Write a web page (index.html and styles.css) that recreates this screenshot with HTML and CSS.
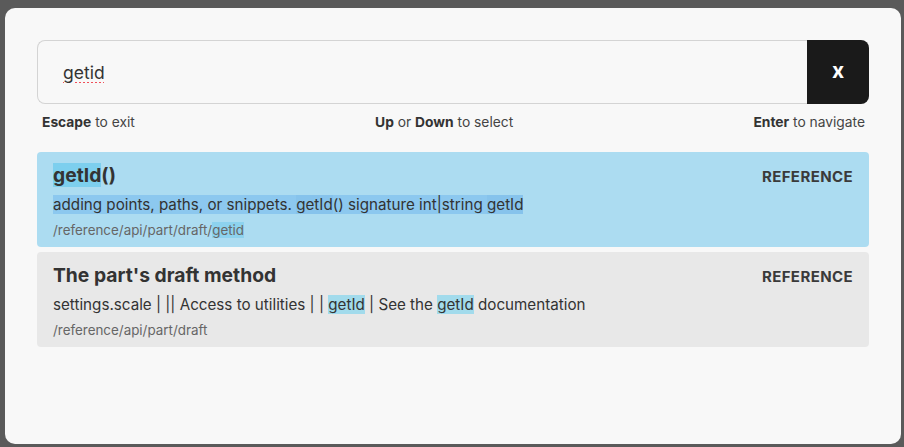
FILE: index.html
```html
<!DOCTYPE html>
<html lang="en">
<head>
<meta charset="utf-8">
<title>Search</title>
<link rel="stylesheet" href="styles.css">
</head>
<body>
<div class="modal">
  <div class="search-row">
    <input class="search-input" type="text" value="getid" spellcheck="false">
    <button class="close-btn">x</button>
  </div>
  <div class="hints">
    <span><b>Escape</b> to exit</span>
    <span><b>Up</b> or <b>Down</b> to select</span>
    <span><b>Enter</b> to navigate</span>
  </div>
  <ul class="results">
    <li class="result active">
      <div class="result-head">
        <span class="result-title"><mark class="hl-title">getId</mark>()</span>
        <span class="result-type">REFERENCE</span>
      </div>
      <div class="result-desc"><mark class="hl-desc">adding points, paths, or snippets. <mark class="hl-desc-strong">getId</mark>() signature int|string <mark class="hl-desc-strong">getId</mark></mark></div>
      <div class="result-path">/reference/api/part/draft/<mark class="hl-path">getid</mark></div>
    </li>
    <li class="result">
      <div class="result-head">
        <span class="result-title">The part's draft method</span>
        <span class="result-type">REFERENCE</span>
      </div>
      <div class="result-desc">settings.scale | || Access to utilities | | <mark class="hl-soft">getId</mark> | See the <mark class="hl-soft">getId</mark> documentation</div>
      <div class="result-path">/reference/api/part/draft</div>
    </li>
  </ul>
</div>
</body>
</html>
```
FILE: styles.css
```css
html, body {
  margin: 0;
  padding: 0;
}
body {
  background: #5a5a5a;
  width: 904px;
  height: 447px;
  overflow: hidden;
  font-family: Inter, "Noto Sans", "Liberation Sans", sans-serif;
  color: #333;
}
.modal {
  box-sizing: border-box;
  margin: 8px 0 0 5px;
  width: 896px;
  height: 436px;
  background: #f8f8f8;
  border-radius: 10px;
  padding: 32px;
}
.search-row {
  display: flex;
  height: 64px;
}
.search-input {
  flex: 1;
  box-sizing: border-box;
  height: 64px;
  margin: 0;
  border: 1px solid #d4d4d4;
  border-right: none;
  border-radius: 8px 0 0 8px;
  background: #f8f8f8;
  padding: 0 0 0 25px;
  font-family: Inter, "Noto Sans", sans-serif;
  font-size: 17.5px;
  color: #333;
  outline: none;
  text-decoration-line: underline;
  text-decoration-style: dotted;
  text-decoration-color: #f0505a;
  text-decoration-thickness: 2px;
  text-underline-offset: 4px;
}
.close-btn {
  width: 62px;
  height: 64px;
  margin: 0;
  border: none;
  border-radius: 0 8px 8px 0;
  background: #1a1a1a;
  color: #fff;
  font-family: Inter, "Noto Sans", sans-serif;
  font-size: 21px;
  font-weight: 700;
  padding: 0 0 3px;
}
.hints {
  display: flex;
  justify-content: space-between;
  margin-top: 9px;
  padding: 0 4px 0 5px;
  font-size: 13.8px;
  line-height: 18px;
  color: #444;
}
.hints b {
  color: #333;
  font-weight: 700;
}
.results {
  list-style: none;
  margin: 21px 0 0;
  padding: 0;
  display: flex;
  flex-direction: column;
  gap: 5px;
}
.result {
  background: #e8e8e8;
  border-radius: 4px;
  padding: 11px 16px 8px;
}
.result.active {
  background: #acdcf1;
}
.result-head {
  display: flex;
  justify-content: space-between;
  align-items: baseline;
}
.result-title {
  font-size: 19.3px;
  font-weight: 700;
  line-height: 24px;
  color: #333;
}
.result-type {
  font-size: 15px;
  font-weight: 700;
  color: #3a3a3a;
  letter-spacing: 0.4px;
}
.result-desc {
  margin-top: 6px;
  font-size: 15.2px;
  line-height: 24px;
  color: #333;
}
.result-path {
  margin-top: 4px;
  font-size: 13.4px;
  line-height: 18px;
  color: #666;
}
mark {
  color: inherit;
}
.hl-title {
  background: #7dcfee;
}
.hl-desc {
  background: #8cc8ef;
}
.hl-desc-strong {
  background: #86c3ec;
}
.hl-path {
  background: #8dd2ee;
}
.hl-soft {
  background: #a2dbec;
}
```
